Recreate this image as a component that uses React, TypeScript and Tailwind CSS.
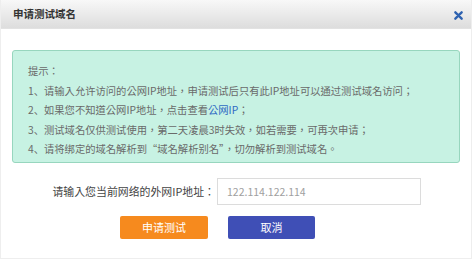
const sc = { fontFamily: '"Noto Sans CJK SC", sans-serif' }

export default function App() {
  const tips = [
    <>请输入允许访问的公网IP地址，申请测试后只有此IP地址可以通过测试域名访问；</>,
    <>
      如果您不知道公网IP地址，点击查看<span className="text-[#2f6bc4]">公网IP</span>；
    </>,
    <>测试域名仅供测试使用，第二天凌晨3时失效，如若需要，可再次申请；</>,
    <>请将绑定的域名解析到“域名解析别名”，切勿解析到测试域名。</>,
  ]

  return (
    <div
      className="h-[259px] w-[472px] overflow-hidden border-x border-b border-[#eeeeee] bg-white"
      style={{ fontFamily: '"Noto Sans CJK TC", "Noto Sans", sans-serif' }}
    >
      <div className="flex h-[29px] items-center justify-between border-b border-[#e2e2e2] bg-gradient-to-b from-[#f8f8f8] to-[#dddddd] pl-[12px] pr-[8px]">
        <span className="text-[10.5px] font-bold text-[#333333]" style={sc}>
          申请测试域名
        </span>
        <svg width="9" height="9" viewBox="0 0 10 10" className="mt-[3px]">
          <path d="M1.5 1.5 L8.5 8.5 M8.5 1.5 L1.5 8.5" stroke="#2e62b0" strokeWidth="2.6" strokeLinecap="round" />
        </svg>
      </div>

      <div className="mx-[11px] mt-[21px] h-[113px] rounded-[3px] border border-[#97d6be] bg-[#c7f2e3] pl-[15px] pt-[10px] text-[10.3px] leading-[19.6px] text-[#6a6a6a]">
        <p>提示：</p>
        {tips.map((t, i) => (
          <p key={i}>
            <span style={sc}>{i + 1}、</span>
            {t}
          </p>
        ))}
      </div>

      <div className="mt-[15px] flex items-center">
        <span className="w-[214px] text-right text-[10.9px] text-[#444444]">请输入您当前网络的外网IP地址：</span>
        <input
          className="ml-[2px] h-[27px] w-[204px] border border-[#dcdcdc] px-[9px] text-[10.5px] text-[#555] outline-none placeholder:text-[#a0a0a0]"
          placeholder="122.114.122.114"
        />
      </div>

      <div className="mt-[11px] flex">
        <button className="ml-[119px] h-[23px] w-[88px] rounded-[2px] bg-[#f68a1e] text-[11px] text-white">
          申请测试
        </button>
        <button className="ml-[20px] h-[23px] w-[87px] rounded-[2px] bg-[#3f4fb6] text-[11px] text-white">
          取消
        </button>
      </div>
    </div>
  )
}
